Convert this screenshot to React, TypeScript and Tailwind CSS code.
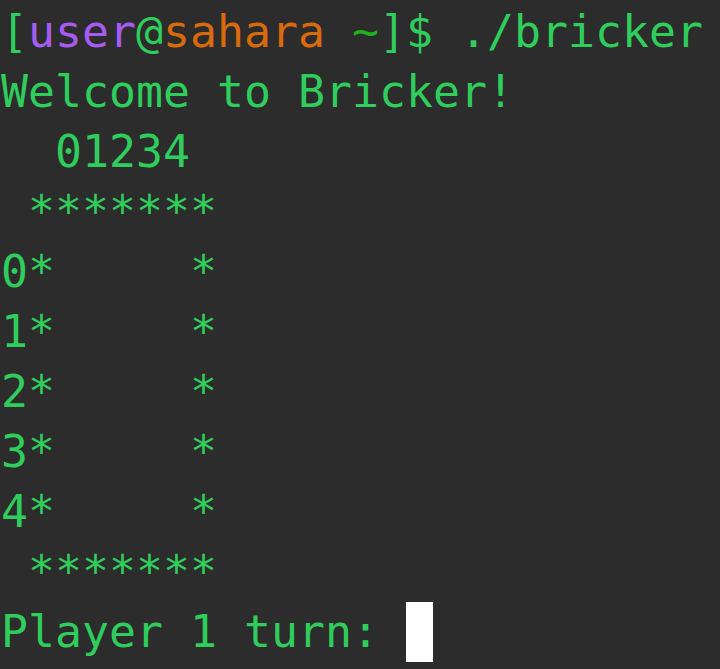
export default function App() {
  const board = ["0*     *", "1*     *", "2*     *", "3*     *", "4*     *"];
  return (
    <div className="h-[669px] w-[720px] overflow-hidden bg-[#2c2c2c] pl-px pt-[2px] font-['DejaVu_Sans_Mono',monospace] text-[44.85px] leading-[60px] whitespace-pre text-[#2fce5c]">
      <div>
        <span>[</span>
        <span className="text-[#a65cf2]">user</span>
        <span>@</span>
        <span className="text-[#d96a0c]">sahara</span>
        <span> </span>
        <span className="text-[#1cb21c]">~</span>
        <span>]$ ./bricker</span>
      </div>
      <div>Welcome to Bricker!</div>
      <div>{"  01234"}</div>
      <div>{" *******"}</div>
      {board.map((row) => (
        <div key={row}>{row}</div>
      ))}
      <div>{" *******"}</div>
      <div className="flex items-start">
        <span>{"Player 1 turn: "}</span>
        <span className="h-[60px] w-[27px] bg-white" />
      </div>
    </div>
  );
}
